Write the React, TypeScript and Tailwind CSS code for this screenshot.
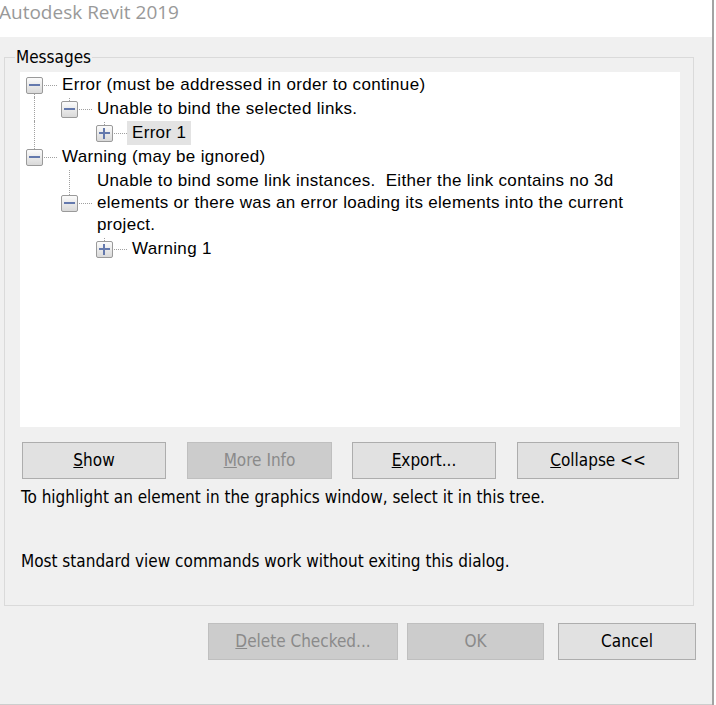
import React from 'react';

const UI_FONT = { fontFamily: '"DejaVu Sans Condensed", "DejaVu Sans", sans-serif' };
const TREE_FONT = { fontFamily: '"Liberation Sans", Arial, sans-serif' };

type Node = {
  label: React.ReactNode;
  level: number;
  open: boolean;
  // which ancestor columns carry a vertical line through this row
  rails: boolean[];
  lineAbove: boolean;
  lineBelow: boolean;
  selected?: boolean;
  tall?: boolean;
};

const NODES: Node[] = [
  { label: 'Error (must be addressed in order to continue)', level: 0, open: true, rails: [], lineAbove: false, lineBelow: true },
  { label: 'Unable to bind the selected links.', level: 1, open: true, rails: [true], lineAbove: true, lineBelow: false },
  { label: 'Error 1', level: 2, open: false, rails: [true, false], lineAbove: true, lineBelow: false, selected: true },
  { label: 'Warning (may be ignored)', level: 0, open: true, rails: [], lineAbove: true, lineBelow: false },
  {
    label: (
      <>
        {'Unable to bind some link instances.  Either the link contains no 3d'}
        <br />
        {'elements or there was an error loading its elements into the current'}
        <br />
        {'project.'}
      </>
    ),
    level: 1,
    open: true,
    rails: [false],
    lineAbove: true,
    lineBelow: false,
    tall: true,
  },
  { label: 'Warning 1', level: 2, open: false, rails: [false, false], lineAbove: true, lineBelow: false },
];

function Expander({ open }: { open: boolean }) {
  return (
    <div className="relative w-[17px] h-[17px] shrink-0 rounded-[2px] border border-[#9a9a9a] bg-linear-to-b from-[#fbfbfb] to-[#d9d9d9]">
      <div className="absolute left-[2px] top-[6px] w-[11px] h-[2px] bg-[#6479ad]" />
      {!open && <div className="absolute left-[6px] top-[2px] w-[2px] h-[11px] bg-[#6479ad]" />}
    </div>
  );
}

function TreeRow({ node }: { node: Node }) {
  return (
    <div className={`flex items-stretch pl-[6px] ${node.tall ? 'h-[68px]' : 'h-[24px]'}`}>
      {node.rails.map((on, i) => (
        <div key={i} className="w-[35px] shrink-0">
          {on && <div className="w-[9px] h-full border-r border-dotted border-[#a0a0a0]" />}
        </div>
      ))}
      <div className="flex flex-col w-[17px] shrink-0 pt-[1px]">
        <div className={`flex-1 w-[9px] ${node.lineAbove ? 'border-r border-dotted border-[#a0a0a0]' : ''}`} />
        <Expander open={node.open} />
        <div className={`flex-1 w-[9px] ${node.lineBelow ? 'border-r border-dotted border-[#a0a0a0]' : ''}`} />
      </div>
      <div className="w-[14px] shrink-0 flex items-center pt-[1px]">
        <div className="w-[13px] ml-[1px] border-t border-dotted border-[#a0a0a0]" />
      </div>
      <div className="flex items-center">
        <div
          className={`px-[5px] py-[1px] text-[17px] leading-[22px] tracking-[0.32px] text-black whitespace-pre ${node.selected ? 'bg-[#e3e3e3]' : ''}`}
          style={TREE_FONT}
        >
          {node.label}
        </div>
      </div>
    </div>
  );
}

function Btn({
  children,
  width,
  disabled,
  className = '',
}: {
  children: React.ReactNode;
  width: string;
  disabled?: boolean;
  className?: string;
}) {
  return (
    <div
      className={`${width} h-[37px] shrink-0 flex items-center justify-center border text-[17px] ${
        disabled ? 'bg-[#cccccc] border-[#bfbfbf] text-[#8a8a8a]' : 'bg-[#e1e1e1] border-[#adadad] text-black'
      } ${className}`}
    >
      {children}
    </div>
  );
}

export default function App() {
  return (
    <div className="flex w-[716px] h-[705px] overflow-hidden bg-white" style={UI_FONT}>
      <div className="flex flex-col w-[712px] h-[705px] bg-[#f0f0f0] border-b border-[#cdcdcd]">
        {/* title bar */}
        <div className="h-[37px] bg-white shrink-0">
          <div
            className="text-[19px] leading-[24px] text-[#999999] -ml-[1px]"
            style={{ fontFamily: '"Open Sans", "Noto Sans", sans-serif' }}
          >
            Autodesk Revit 2019
          </div>
        </div>

        <fieldset className="mt-[11px] ml-[4px] w-[690px] h-[558px] border border-[#dadada] shrink-0">
          <legend className="ml-[10px] px-[1px] text-[17px] leading-[18px] text-black">Messages</legend>

          <div className="mt-[6px] ml-[15px] w-[660px] h-[355px] bg-white pt-[1px]">
            {NODES.map((n, i) => (
              <TreeRow key={i} node={n} />
            ))}
          </div>

          <div className="flex mt-[15px] ml-[17px]">
            <Btn width="w-[144px]">
              <span className="underline">S</span>how
            </Btn>
            <Btn width="w-[145px]" disabled className="ml-[21px]">
              <span className="underline">M</span>ore Info
            </Btn>
            <Btn width="w-[144px]" className="ml-[20px]">
              <span className="underline">E</span>xport...
            </Btn>
            <Btn width="w-[162px]" className="ml-[21px]">
              <span className="underline">C</span>ollapse &lt;&lt;
            </Btn>
          </div>

          <div className="mt-[8px] ml-[16px] text-[17px] leading-[20px] text-black">
            To highlight an element in the graphics window, select it in this tree.
          </div>
          <div className="mt-[44px] ml-[16px] text-[17px] leading-[20px] text-black">
            Most standard view commands work without exiting this dialog.
          </div>
        </fieldset>

        <div className="flex mt-[17px] ml-[208px]">
          <Btn width="w-[190px]" disabled>
            <span className="underline">D</span>elete Checked...
          </Btn>
          <Btn width="w-[137px]" disabled className="ml-[9px]">
            OK
          </Btn>
          <Btn width="w-[138px]" className="ml-[14px]">
            Cancel
          </Btn>
        </div>
      </div>
      <div className="w-[2px] h-[705px] bg-[#a3a3a3] shrink-0" />
      <div className="w-[2px] h-[705px] bg-white shrink-0" />
    </div>
  );
}
